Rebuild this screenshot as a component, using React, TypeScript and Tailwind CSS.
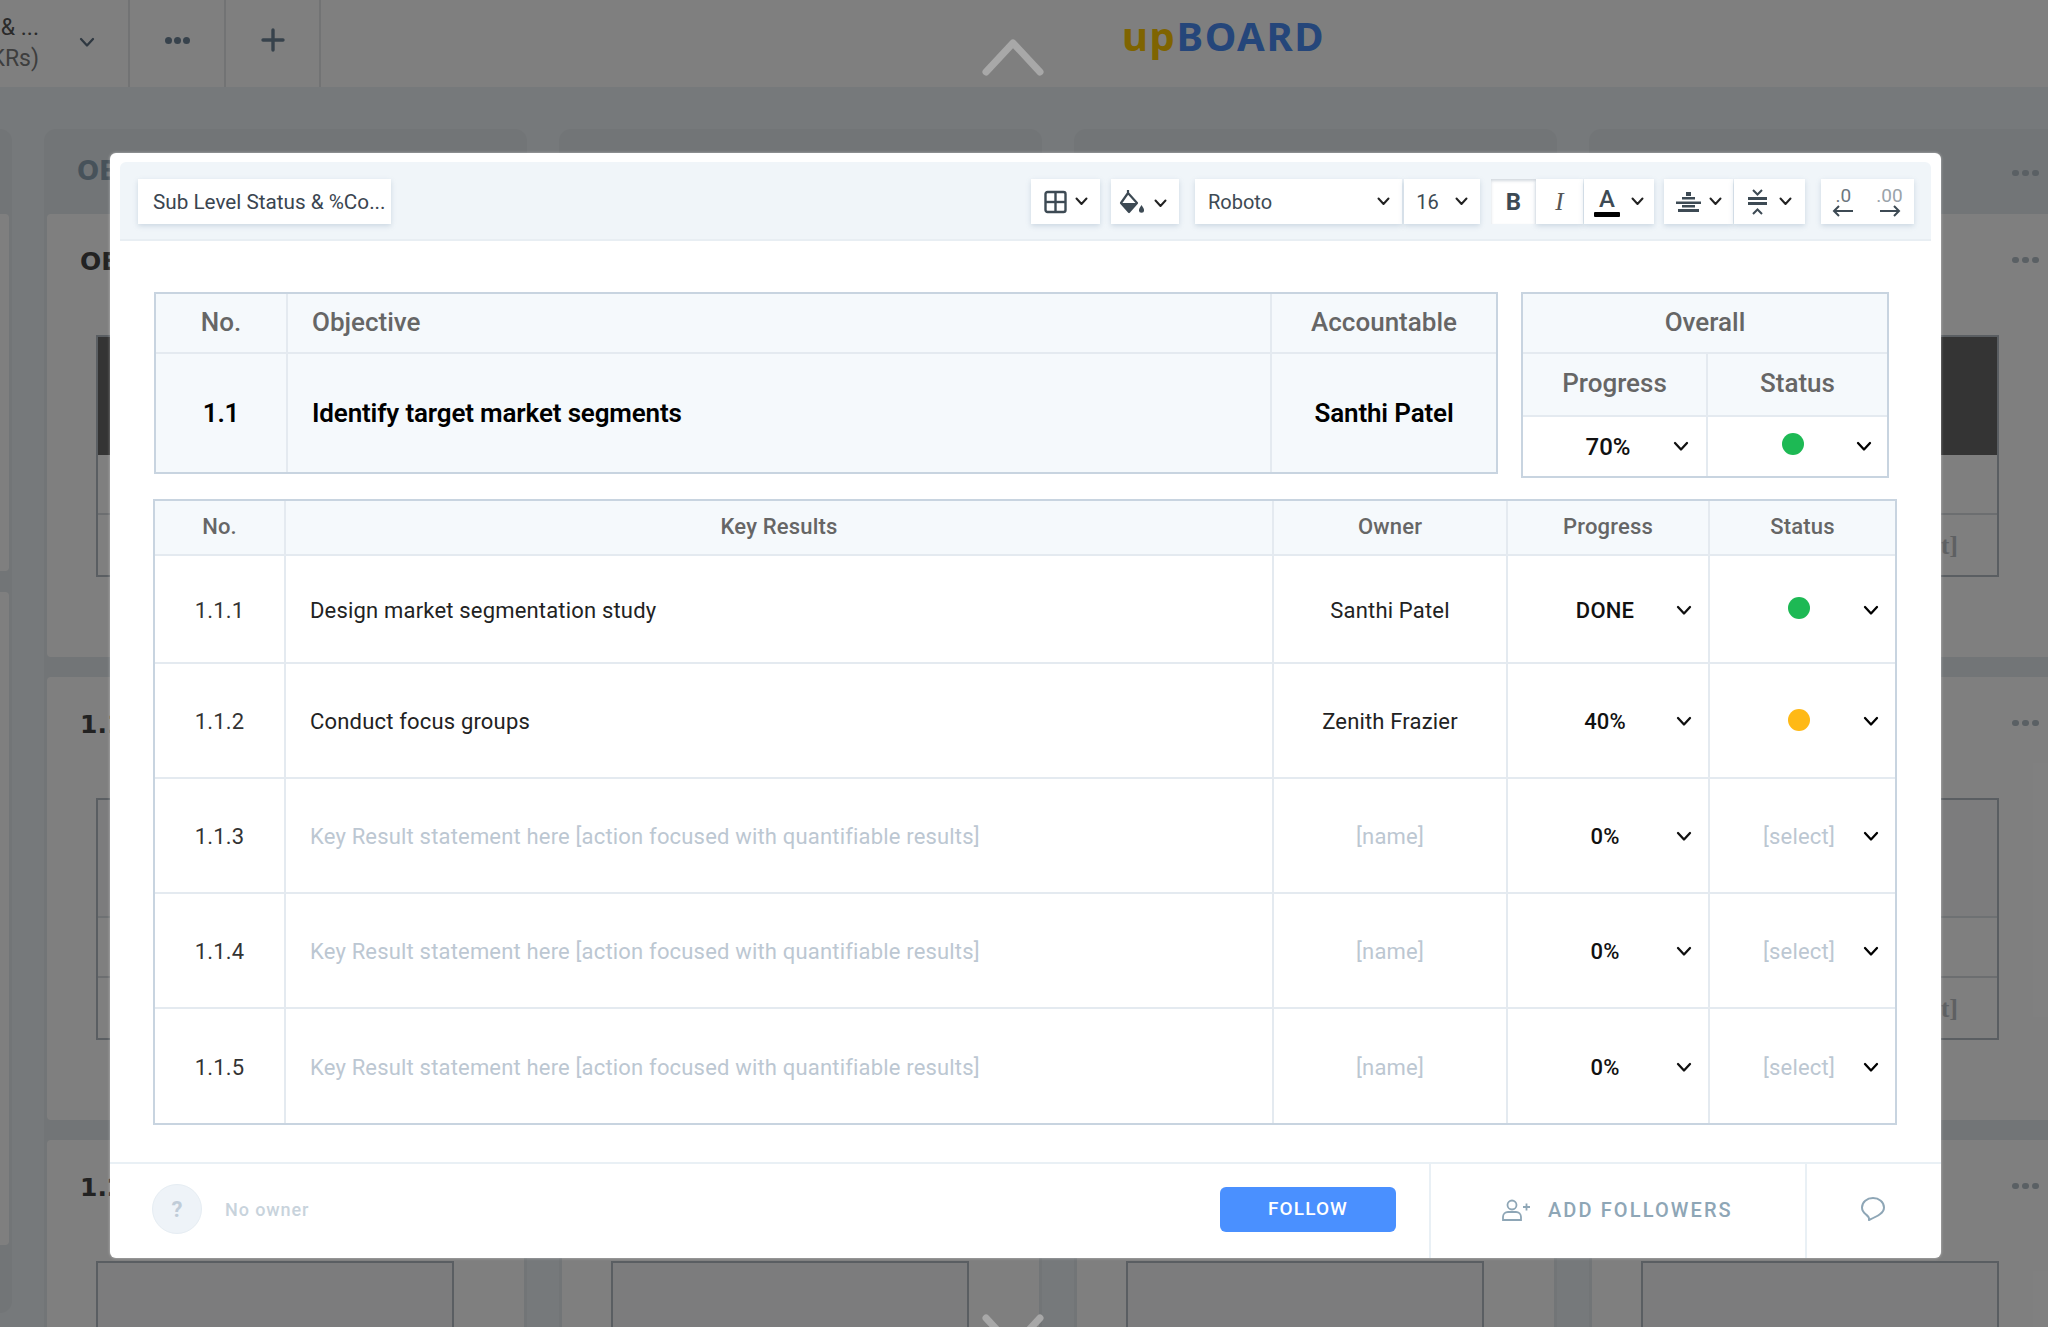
const Chev = ({ className = "" }: { className?: string }) => (
  <svg width="16" height="11" viewBox="0 0 16 11" fill="none" className={`shrink-0 ${className}`}>
    <polyline points="2,2 8,8.5 14,2" stroke="currentColor" strokeWidth="2.3" strokeLinecap="round" strokeLinejoin="round" />
  </svg>
);

const Dots = ({ className = "" }: { className?: string }) => (
  <div className={`flex gap-[3px] ${className}`}>
    <span className="w-[7px] h-[6px] rounded-full bg-[#b4c0c8]" />
    <span className="w-[7px] h-[6px] rounded-full bg-[#b4c0c8]" />
    <span className="w-[7px] h-[6px] rounded-full bg-[#b4c0c8]" />
  </div>
);

const InnerTable = ({ dark, select }: { dark?: boolean; select?: boolean }) => (
  <div className="mx-[49px] w-[358px] border-2 border-[#b4bcc4] flex flex-col">
    <div className={dark ? "h-[118px] bg-[#686868]" : "h-[118px] bg-[#f8f9fa] border-b-2 border-[#dde2e6]"} />
    <div className="h-[60px] border-b-2 border-[#d8dde1]" />
    <div className="h-[60px] flex items-center justify-end pr-[39px] font-['Liberation_Serif',serif] text-[26px] font-bold text-[#bcc0c4]">
      {select ? "[select]" : ""}
    </div>
  </div>
);

type ColProps = { titles?: boolean; menu?: boolean };

const Card = ({ title, dark, h, menu }: { title: string; dark?: boolean; h: string; menu?: boolean }) => (
  <div className={`mx-[3px] rounded-[4px] bg-white flex flex-col ${h}`}>
    <div className="h-[121px] flex justify-between pl-[33px] pr-[30px] pt-[33px]">
      <span className="font-['DejaVu_Sans',sans-serif] font-bold text-[25px] leading-[30px] text-[#444]">{title}</span>
      {menu && <Dots className="mt-[10px]" />}
    </div>
    <InnerTable dark={dark} select={menu} />
  </div>
);

const Column = ({ titles, menu }: ColProps) => (
  <div className="w-[483px] shrink-0 rounded-t-[12px] bg-[#e4eaee] flex flex-col">
    <div className="h-[85px] flex justify-between pl-[33px] pr-[33px] pt-[27px]">
      <span className="font-['DejaVu_Sans',sans-serif] font-bold text-[26px] leading-[30px] text-[#8ea4b5]">{titles ? "OBJECTIVES" : ""}</span>
      {menu && <Dots className="mt-[14px]" />}
    </div>
    <div className="flex flex-col gap-[20px]">
      <Card title={titles ? "OBJECTIVE 1" : ""} dark={titles || menu} menu={menu} h="h-[443px]" />
      <Card title={titles ? "1.1" : ""} menu={menu} h="h-[443px]" />
      <Card title={titles ? "1.2" : ""} menu={menu} h="h-[400px]" />
    </div>
  </div>
);

const FirstColumn = () => (
  <div className="w-[483px] h-[1184px] shrink-0 rounded-[12px] bg-[#e4eaee] flex flex-col gap-[21px] pt-[85px] pr-[3px]">
    <div className="h-[357px] rounded-[4px] bg-white" />
    <div className="h-[653px] rounded-[4px] bg-white" />
  </div>
);

const Background = () => (
  <div className="h-[1327px] w-[2048px] overflow-hidden bg-[#ecf2f6]">
    <header className="h-[87px] bg-white flex">
      <div className="w-[130px] h-full border-r-2 border-[#e4e6e8] flex items-center justify-end pb-[2px]">
        <div className="text-right text-[23px] leading-[31px] mr-[40px] whitespace-nowrap">
          <div className="text-[#555]">&amp; ...</div>
          <div className="text-[#7c7c7c]">(KRs)</div>
        </div>
        <Chev className="mr-[33px] text-[#5e7183]" />
      </div>
      <div className="w-[96px] h-full border-r-2 border-[#e4e6e8] flex items-center justify-center pb-[7px]">
        <div className="flex gap-[2px]">
          <span className="w-[7px] h-[7px] rounded-full bg-[#6f8598]" />
          <span className="w-[7px] h-[7px] rounded-full bg-[#6f8598]" />
          <span className="w-[7px] h-[7px] rounded-full bg-[#6f8598]" />
        </div>
      </div>
      <div className="w-[95px] h-full border-r-2 border-[#e4e6e8] flex items-center justify-center pb-[7px]">
        <svg width="24" height="24" viewBox="0 0 24 24" stroke="#6f8598" strokeWidth="3.4" strokeLinecap="round">
          <line x1="12" y1="2" x2="12" y2="22" />
          <line x1="2" y1="12" x2="22" y2="12" />
        </svg>
      </div>
      <div className="ml-[801px] pt-[9px] font-['Noto_Sans',sans-serif] font-bold text-[40px] leading-[54px] tracking-[1.6px] whitespace-nowrap">
        <span className="text-[#ffc800]">up</span>
        <span className="text-[#4a8df5]">BOARD</span>
      </div>
    </header>
    <div className="flex gap-[32px] ml-[-471px] mt-[42px]">
      <FirstColumn />
      <Column titles />
      <Column />
      <Column />
      <Column menu />
    </div>
  </div>
);

const ToolBtn = ({ w, className = "", children }: { w: string; className?: string; children: React.ReactNode }) => (
  <div className={`h-[45px] bg-white flex items-center justify-center shadow-[0_2px_5px_rgba(110,140,170,0.28)] ${w} ${className}`}>
    {children}
  </div>
);

const SmallChev = ({ className = "" }: { className?: string }) => (
  <svg width="13" height="9" viewBox="0 0 13 9" fill="none" className={className}>
    <polyline points="1.5,1.5 6.5,7 11.5,1.5" stroke="#222" strokeWidth="2" strokeLinecap="round" strokeLinejoin="round" />
  </svg>
);

const Toolbar = () => (
  <div className="mx-[10px] mt-[9px] h-[79px] rounded-t-[6px] bg-[#f0f5f9] border-b-2 border-[#e8eef3] flex items-start pt-[17px] pl-[18px] pr-[17px]">
    <div className="w-[253px] h-[45px] bg-white flex items-center pl-[15px] pt-[3px] text-[20.7px] text-[#3a4550] shadow-[0_2px_5px_rgba(110,140,170,0.28)] whitespace-nowrap">
      Sub Level Status &amp; %Co...
    </div>
    <div className="ml-auto flex">
      <ToolBtn w="w-[69px]" className="gap-[8px]">
        <svg width="23" height="24" viewBox="0 0 23 24" fill="none" stroke="#3d4a54" strokeWidth="2.4">
          <rect x="1.5" y="2" width="20" height="20" rx="2" />
          <line x1="11.5" y1="2" x2="11.5" y2="22" />
          <line x1="1.5" y1="12" x2="21.5" y2="12" />
        </svg>
        <SmallChev />
      </ToolBtn>
      <ToolBtn w="w-[68px]" className="ml-[11px] gap-[9px] pr-[5px]">
        <svg width="26" height="26" viewBox="0 0 26 26">
          <path d="M9 1 L9 4.5 M2 14 L9 4 L18 14 L10 23 Z" fill="none" stroke="#3d4a54" strokeWidth="2.2" strokeLinejoin="round" />
          <path d="M2 14 H18 L10 23 Z" fill="#3d4a54" />
          <path d="M22.5 16 C24.5 19 25 20 25 21.2 A2.5 2.5 0 0 1 20 21.2 C20 20 20.5 19 22.5 16 Z" fill="#3d4a54" />
        </svg>
        <SmallChev className="mt-[3px]" />
      </ToolBtn>
      <ToolBtn w="w-[207px]" className="ml-[16px] pl-[13px] pr-[12px]">
        <span className="flex-1 text-[20px] text-[#3d4a54]">Roboto</span>
        <SmallChev />
      </ToolBtn>
      <ToolBtn w="w-[76px]" className="ml-[2px] gap-[16px]">
        <span className="text-[20px] text-[#3d4a54]">16</span>
        <SmallChev />
      </ToolBtn>
      <ToolBtn w="w-[45px]" className="ml-[11px] bg-[#f6f8fa] shadow-[inset_0_2px_3px_rgba(110,130,150,0.3)]">
        <span className="text-[24px] font-bold text-[#3d4a54]">B</span>
      </ToolBtn>
      <ToolBtn w="w-[47px]">
        <span className="font-['Liberation_Serif',serif] italic text-[25px] text-[#555]">I</span>
      </ToolBtn>
      <ToolBtn w="w-[70px]" className="ml-[1px] gap-[11px]">
        <div className="flex flex-col items-center">
          <span className="text-[24px] leading-[26px] font-medium text-[#3d4a54]">A</span>
          <span className="w-[26px] h-[5px] rounded-[1px] bg-black" />
        </div>
        <SmallChev />
      </ToolBtn>
      <ToolBtn w="w-[69px]" className="ml-[10px] gap-[8px]">
        <svg width="25" height="20" viewBox="0 0 25 20" fill="#3d4a54">
          <rect x="10" y="0" width="5" height="4" />
          <rect x="6" y="5" width="13" height="2.5" />
          <rect x="0" y="9.5" width="25" height="2.5" />
          <rect x="6" y="13" width="13" height="2.5" />
          <rect x="2" y="17" width="21" height="3" />
        </svg>
        <SmallChev />
      </ToolBtn>
      <ToolBtn w="w-[71px]" className="ml-[1px] gap-[11px]">
        <svg width="21" height="26" viewBox="0 0 21 26" fill="none" stroke="#3d4a54">
          <polyline points="6,1 10.5,5.5 15,1" strokeWidth="2" />
          <rect x="1" y="8" width="19" height="3" fill="#3d4a54" stroke="none" />
          <rect x="1" y="13" width="19" height="3" fill="#3d4a54" stroke="none" />
          <polyline points="6,25 10.5,20.5 15,25" strokeWidth="2" />
        </svg>
        <SmallChev />
      </ToolBtn>
      <ToolBtn w="w-[93px]" className="ml-[16px] gap-[22px]">
        <div className="flex flex-col items-center">
          <span className="text-[19px] leading-[18px] text-[#6d7780]">.0</span>
          <svg width="22" height="12" viewBox="0 0 22 12" fill="none" stroke="#3d4a54" strokeWidth="2">
            <path d="M21 6 H2 M7 1 L2 6 L7 11" />
          </svg>
        </div>
        <div className="flex flex-col items-center">
          <span className="text-[19px] leading-[18px] text-[#9aa3aa]">.00</span>
          <svg width="22" height="12" viewBox="0 0 22 12" fill="none" stroke="#3d4a54" strokeWidth="2">
            <path d="M1 6 H20 M15 1 L20 6 L15 11" />
          </svg>
        </div>
      </ToolBtn>
    </div>
  </div>
);

const Dot = ({ color }: { color: string }) => <span className={`w-[22px] h-[22px] rounded-full ${color}`} />;

const ObjectiveTables = () => (
  <div className="flex items-start ml-[44px]">
    <div className="w-[1344px] h-[182px] border-2 border-[#c8d4e0] bg-[#f5f9fc] grid grid-cols-[132px_984px_1fr] grid-rows-[60px_1fr] text-[26px]">
      <div className="flex items-center justify-center pb-[2px] font-medium text-[#666] border-r-2 border-b-2 border-[#e4eaf0]">No.</div>
      <div className="flex items-center pl-[24px] pb-[2px] font-medium text-[#666] border-r-2 border-b-2 border-[#e4eaf0]">Objective</div>
      <div className="flex items-center justify-center pb-[2px] font-medium text-[#666] border-b-2 border-[#e4eaf0]">Accountable</div>
      <div className="flex items-center justify-center font-semibold tracking-[-0.15px] text-black border-r-2 border-[#e4eaf0]">1.1</div>
      <div className="flex items-center pl-[24px] font-semibold tracking-[-0.15px] text-black border-r-2 border-[#e4eaf0]">Identify target market segments</div>
      <div className="flex items-center justify-center font-semibold tracking-[-0.15px] text-black">Santhi Patel</div>
    </div>
    <div className="ml-[23px] w-[368px] h-[186px] border-2 border-[#c8d4e0] grid grid-cols-[185px_1fr] grid-rows-[60px_63px_1fr] text-[26px]">
      <div className="col-span-2 flex items-center justify-center pb-[2px] font-medium text-[#666] bg-[#f5f9fc] border-b-2 border-[#e4eaf0]">Overall</div>
      <div className="flex items-center justify-center pb-[2px] font-medium text-[#666] bg-[#f5f9fc] border-r-2 border-b-2 border-[#e4eaf0]">Progress</div>
      <div className="flex items-center justify-center pb-[2px] font-medium text-[#666] bg-[#f5f9fc] border-b-2 border-[#e4eaf0]">Status</div>
      <div className="flex items-center border-r-2 border-[#e4eaf0] text-[24px] font-medium text-[#111]">
        <span className="w-[130px] pl-[40px] text-center">70%</span>
        <Chev className="ml-[20px]" />
      </div>
      <div className="flex items-center">
        <span className="w-[148px] flex justify-center pl-[22px] -mt-[5px]"><Dot color="bg-[#1db954]" /></span>
        <Chev />
      </div>
    </div>
  </div>
);

type Row = { no: string; text: string; owner: string; progress: string; status: "green" | "amber" | "none"; h: string };

const rows: Row[] = [
  { no: "1.1.1", text: "Design market segmentation study", owner: "Santhi Patel", progress: "DONE", status: "green", h: "h-[108px]" },
  { no: "1.1.2", text: "Conduct focus groups", owner: "Zenith Frazier", progress: "40%", status: "amber", h: "h-[115px]" },
  { no: "1.1.3", text: "", owner: "", progress: "0%", status: "none", h: "h-[115px]" },
  { no: "1.1.4", text: "", owner: "", progress: "0%", status: "none", h: "h-[115px]" },
  { no: "1.1.5", text: "", owner: "", progress: "0%", status: "none", h: "h-[114px]" },
];

const KeyResults = () => (
  <div className="ml-[43px] mt-[21px] w-[1744px] border-2 border-[#c8d4e0] text-[22px] tracking-[0.18px]">
    <div className="h-[55px] grid grid-cols-[131px_988px_234px_202px_1fr] bg-[#f5f9fc] font-medium text-[#666] border-b-2 border-[#e4eaf0] [&>div]:pb-[2px]">
      <div className="flex items-center justify-center border-r-2 border-[#e4eaf0]">No.</div>
      <div className="flex items-center justify-center border-r-2 border-[#e4eaf0]">Key Results</div>
      <div className="flex items-center justify-center border-r-2 border-[#e4eaf0]">Owner</div>
      <div className="flex items-center justify-center border-r-2 border-[#e4eaf0]">Progress</div>
      <div className="flex items-center justify-center">Status</div>
    </div>
    {rows.map((r, i) => (
      <div
        key={r.no}
        className={`grid grid-cols-[131px_988px_234px_202px_1fr] [&>div]:pt-[2px] ${r.h} ${i < rows.length - 1 ? "border-b-2 border-[#e4eaf0]" : ""}`}
      >
        <div className="flex items-center justify-center border-r-2 border-[#e4eaf0] text-[#333]">{r.no}</div>
        {r.text ? (
          <div className="flex items-center pl-[24px] border-r-2 border-[#e4eaf0] text-[#222]">{r.text}</div>
        ) : (
          <div className="flex items-center pl-[24px] border-r-2 border-[#e4eaf0] text-[#bcc7d2]">
            Key Result statement here [action focused with quantifiable results]
          </div>
        )}
        {r.owner ? (
          <div className="flex items-center justify-center border-r-2 border-[#e4eaf0] text-[#222]">{r.owner}</div>
        ) : (
          <div className="flex items-center justify-center border-r-2 border-[#e4eaf0] text-[#bcc7d2]">[name]</div>
        )}
        <div className="flex items-center pl-[33px] border-r-2 border-[#e4eaf0] font-medium text-[#111]">
          <span className="w-[128px] text-center">{r.progress}</span>
          <Chev className="ml-[7px]" />
        </div>
        <div className="flex items-center">
          <span className="w-[153px] pl-[25px] flex justify-center">
            {r.status === "green" && <Dot color="bg-[#1db954] -mt-[4px]" />}
            {r.status === "amber" && <Dot color="bg-[#ffb915] -mt-[4px]" />}
            {r.status === "none" && <span className="text-[#bcc7d2]">[select]</span>}
          </span>
          <Chev />
        </div>
      </div>
    ))}
  </div>
);

const Footer = () => (
  <div className="mt-[37px] h-[96px] border-t-2 border-[#e9f0f5] flex items-stretch">
    <div className="flex-1 flex items-center pl-[42px] pb-[4px]">
      <div className="w-[50px] h-[50px] rounded-full bg-[#eef3f8] border border-[#e6edf3] flex items-center justify-center text-[22px] font-bold text-[#c0ccd8]">?</div>
      <span className="ml-[23px] text-[18px] font-medium tracking-[0.9px] text-[#c8d3dc]">No owner</span>
      <button className="ml-auto mr-[33px] w-[176px] h-[45px] rounded-[6px] bg-[#4a90ff] text-white text-[19px] font-medium tracking-[1.1px]">FOLLOW</button>
    </div>
    <div className="w-[376px] border-l-2 border-[#e9f0f5] flex items-center pl-[71px] pb-[2px]">
      <svg width="28" height="22" viewBox="0 0 28 22" fill="none" stroke="#8ea6b6" strokeWidth="1.8">
        <circle cx="10" cy="6" r="4.5" />
        <path d="M1 21 v-3 a5 5 0 0 1 5 -5 h8 a5 5 0 0 1 5 5 v3 Z" />
        <path d="M21 8 h7 M24.5 4.5 v7" />
      </svg>
      <span className="ml-[18px] text-[20px] font-medium tracking-[2.1px] text-[#8ea6b6] whitespace-nowrap">ADD FOLLOWERS</span>
    </div>
    <div className="w-[136px] border-l-2 border-[#e9f0f5] flex items-center justify-center pr-[3px] pb-[4px]">
      <svg width="26" height="26" viewBox="0 0 26 26" fill="none" stroke="#8ea6b6" strokeWidth="2" strokeLinejoin="round">
        <path d="M13 2 C19 2 24 6 24 11.5 C24 17 18 20 9 24 C9.5 21 8 20 6 18.5 C3.5 16.5 2 14 2 11.5 C2 6 7 2 13 2 Z" />
      </svg>
    </div>
  </div>
);

export default function App() {
  return (
    <div className="relative h-[1327px] w-[2048px] overflow-hidden font-['Roboto',sans-serif]">
      <Background />
      <div className="absolute inset-0 bg-black/50" />
      <svg className="absolute left-[982px] top-[38px]" width="62" height="38" viewBox="0 0 62 38" fill="none" stroke="#a8a8a8" strokeWidth="7" strokeLinecap="round" strokeLinejoin="round">
        <polyline points="4,34 31,5 58,34" />
      </svg>
      <svg className="absolute left-[982px] top-[1314px]" width="62" height="38" viewBox="0 0 62 38" fill="none" stroke="#a8a8a8" strokeWidth="7" strokeLinecap="round" strokeLinejoin="round">
        <polyline points="4,4 31,33 58,4" />
      </svg>
      <div className="absolute left-[110px] top-[153px] w-[1831px] h-[1105px] rounded-[6px] bg-white flex flex-col shadow-[0_0_3px_rgba(255,255,255,0.5)]">
        <Toolbar />
        <div className="mt-[51px]">
          <ObjectiveTables />
          <KeyResults />
        </div>
        <Footer />
      </div>
    </div>
  );
}
